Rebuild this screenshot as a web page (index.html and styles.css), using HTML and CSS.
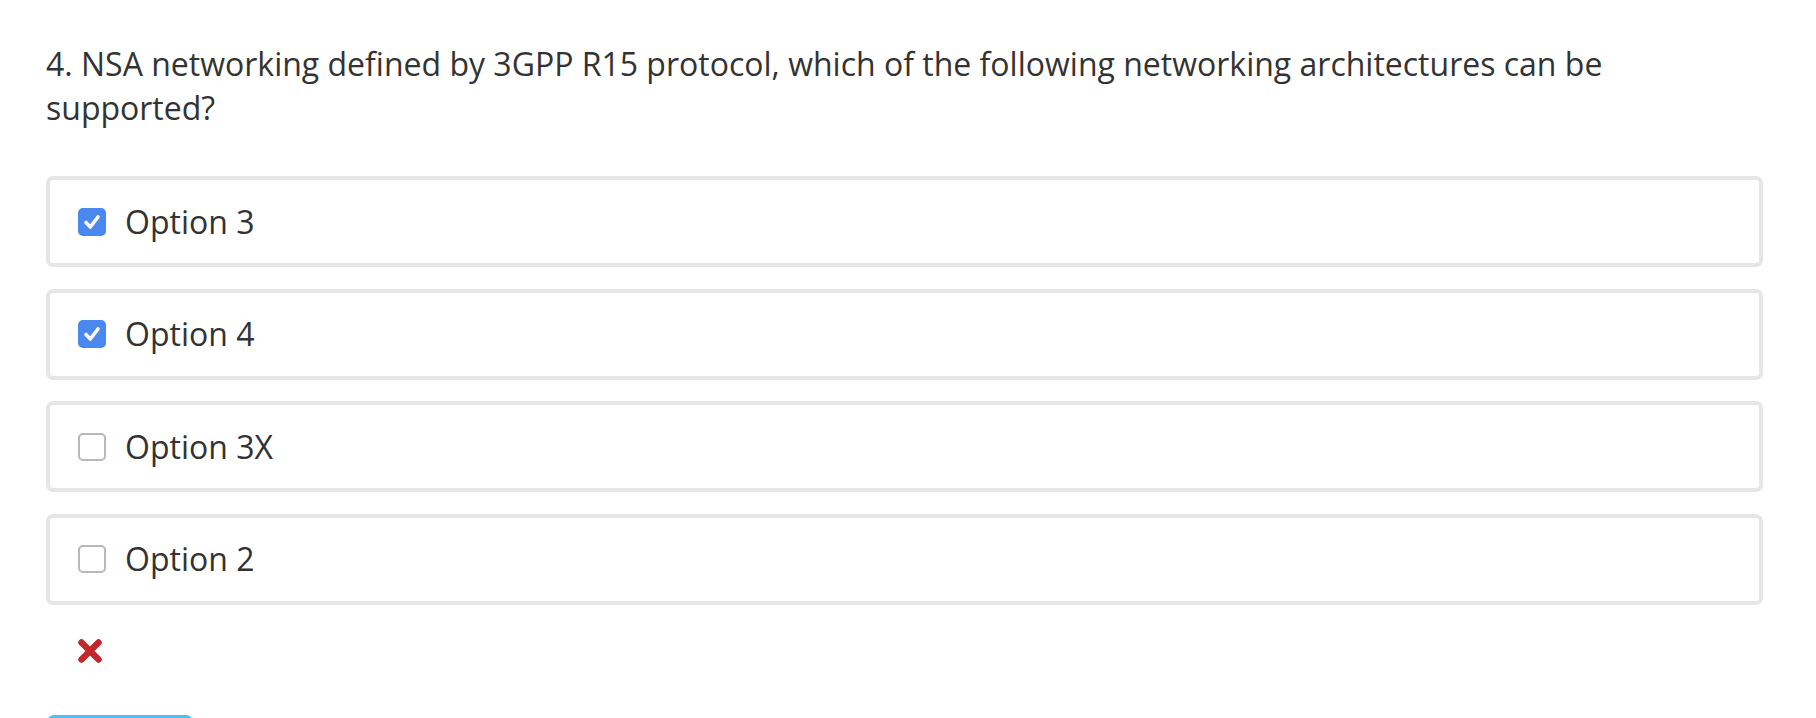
FILE: index.html
```html
<!DOCTYPE html>
<html>
<head>
<meta charset="utf-8">
<link rel="stylesheet" href="styles.css">
</head>
<body>
<div class="page">
  <h2 class="question">4. NSA networking defined by 3GPP R15 protocol, which of the following networking architectures can be supported?</h2>
  <div class="options">
    <label class="option">
      <span class="box checked"><svg viewBox="0 0 28 28" width="28" height="28"><path d="M8 14.5 L12.3 19 L20 9" fill="none" stroke="#fff" stroke-width="3.6" stroke-linecap="round" stroke-linejoin="round"/></svg></span>
      <span class="label">Option 3</span>
    </label>
    <label class="option">
      <span class="box checked"><svg viewBox="0 0 28 28" width="28" height="28"><path d="M8 14.5 L12.3 19 L20 9" fill="none" stroke="#fff" stroke-width="3.6" stroke-linecap="round" stroke-linejoin="round"/></svg></span>
      <span class="label">Option 4</span>
    </label>
    <label class="option">
      <span class="box"></span>
      <span class="label">Option 3X</span>
    </label>
    <label class="option">
      <span class="box"></span>
      <span class="label">Option 2</span>
    </label>
  </div>
  <div class="result">
    <svg viewBox="0 0 26 26" width="26" height="26"><path d="M4.5 4.5 L21.5 21.5 M21.5 4.5 L4.5 21.5" stroke="#c1272d" stroke-width="6.5" stroke-linecap="round"/></svg>
  </div>
  <button class="submit"></button>
</div>
</body>
</html>
```
FILE: styles.css
```css
html, body {
  margin: 0;
  padding: 0;
  background: #fff;
}
body {
  height: 718px;
  overflow: hidden;
}
.page {
  padding: 42px 53px 0 46px;
  font-family: "Open Sans", "Liberation Sans", sans-serif;
  color: #333;
}
.question {
  margin: 0 0 46px 0;
  font-size: 32px;
  line-height: 44px;
  font-weight: 400;
  color: #333;
}
.options {
  display: flex;
  flex-direction: column;
  gap: 21.5px;
}
.option {
  box-sizing: border-box;
  height: 91px;
  border: 4px solid #e6e6e6;
  border-radius: 7px;
  display: flex;
  align-items: center;
  padding-left: 28px;
}
.box {
  box-sizing: border-box;
  width: 28px;
  height: 28px;
  border: 2px solid #b8b8b8;
  border-radius: 5px;
  background: #fff;
  display: flex;
  flex-shrink: 0;
}
.box.checked {
  border: none;
  background: #4a87ee;
}
.label {
  margin-left: 19px;
  font-size: 32px;
  line-height: 40px;
  color: #333;
}
.result {
  padding: 33px 0 0 31px;
  height: 26px;
}
.result svg {
  display: block;
}
.submit {
  display: block;
  margin-top: 51px;
  margin-left: 1px;
  width: 146px;
  height: 44px;
  border: none;
  border-radius: 7px;
  background: #4fc0f6;
}
```
